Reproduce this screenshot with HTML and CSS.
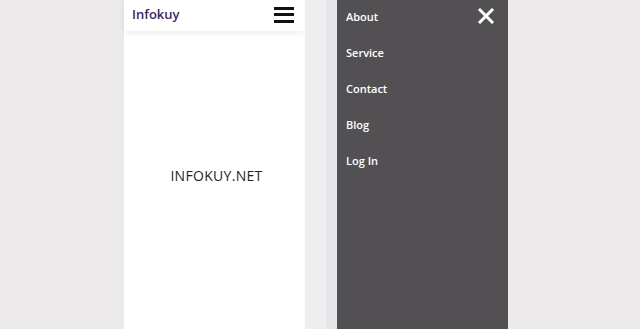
FILE: index.html
```html
<!DOCTYPE html>
<html lang="en">
<head>
    <meta charset="UTF-8">
    <meta name="viewport" content="width=device-width, initial-scale=1.0">
    <title>Infokuy</title>
    <link rel="stylesheet" href="styles.css">
</head>
<body>

<div class="stage">
    <div class="phone">
        <div class="topbar">
            <span class="brand">Infokuy</span>
            <svg class="burger" width="20" height="18" viewBox="0 0 20 18">
                <rect x="0" y="2" width="20" height="3" fill="#111"/>
                <rect x="0" y="8" width="20" height="3" fill="#111"/>
                <rect x="0" y="15" width="20" height="3" fill="#111"/>
            </svg>
        </div>
        <div class="content">INFOKUY.NET</div>
    </div>

    <div class="gutter">
        <div class="gutter-light"></div>
        <div class="gutter-dark"></div>
    </div>

    <div class="drawer">
        <svg class="close" width="16" height="16" viewBox="0 0 16 16">
            <path d="M2 2 L14 14 M14 2 L2 14" stroke="#fff" stroke-width="3" stroke-linecap="square"/>
        </svg>
        <ul class="menu">
            <li>About</li>
            <li>Service</li>
            <li>Contact</li>
            <li>Blog</li>
            <li>Log In</li>
        </ul>
    </div>
</div>

</body>
</html>
```

FILE: styles.css
```css
body {
    margin: 0;
    background-color: #ebe9ea;
    font-family: "Open Sans", "DejaVu Sans", sans-serif;
}
.stage {
    display: flex;
    height: 329px;
    padding-left: 124px;
}
.phone {
    width: 181px;
    background-color: #fff;
    display: flex;
    flex-direction: column;
}
.topbar {
    height: 31px;
    box-sizing: border-box;
    display: flex;
    align-items: center;
    justify-content: space-between;
    padding: 0 11px 3px 8px;
    box-shadow: 0 2px 6px rgba(0, 0, 0, 0.08);
}
.brand {
    color: #3b1f6b;
    font-size: 13px;
    font-weight: 600;
}
.burger {
    display: block;
}
.content {
    flex: 1;
    display: flex;
    align-items: center;
    justify-content: center;
    padding: 0 0 10px 4px;
    font-size: 14px;
    font-weight: 500;
    color: #1e1e1e;
    letter-spacing: 0.3px;
}
.gutter {
    display: flex;
    width: 32px;
}
.gutter-light {
    width: 21px;
    background-color: #eeedf0;
}
.gutter-dark {
    flex: 1;
    background-color: #e6e5e8;
}
.drawer {
    position: relative;
    width: 171px;
    background-color: #525052;
}
.close {
    position: absolute;
    top: 8px;
    right: 14px;
}
.menu {
    list-style: none;
    margin: 0;
    padding: 9px 0 0 9px;
}
.menu li {
    color: #fff;
    font-size: 11px;
    font-weight: 600;
    height: 36px;
    line-height: 16px;
}
```
